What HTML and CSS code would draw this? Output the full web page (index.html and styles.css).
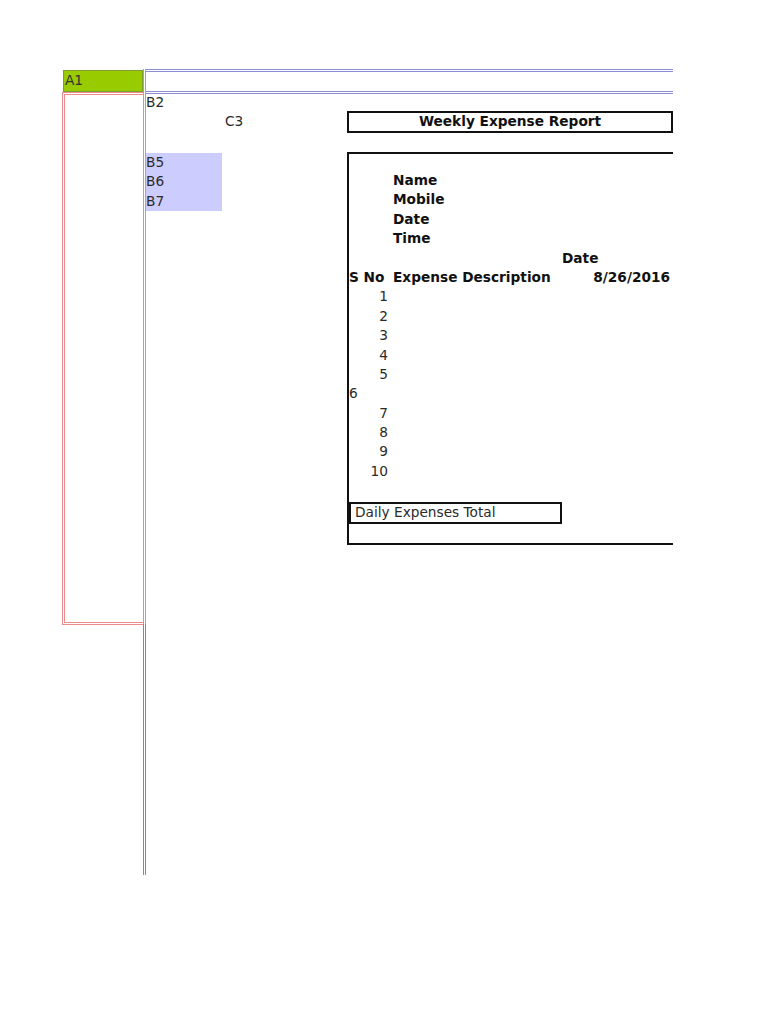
FILE: index.html
```html
<!DOCTYPE html>
<html>
<head>
<meta charset="utf-8">
<link rel="stylesheet" href="styles.css">
</head>
<body>
<div class="sheet">
  <div class="col-a">
    <div class="a1">A1</div>
    <div class="redbox"></div>
  </div>
  <div class="divider">
    <div class="div-red"></div>
    <div class="div-gray"></div>
  </div>
  <div class="main">
    <div class="toprow"></div>
    <div class="row-b2">B2</div>
    <div class="row-c3">
      <div class="cell-c3">C3</div>
      <div class="title">Weekly Expense Report</div>
    </div>
    <div class="body-row">
      <div class="sel">
        <div>B5</div>
        <div>B6</div>
        <div>B7</div>
      </div>
      <div class="report">
        <div class="row"><span></span><span class="lbl b">Name</span><span></span></div>
        <div class="row"><span></span><span class="lbl b">Mobile</span><span></span></div>
        <div class="row"><span></span><span class="lbl b">Date</span><span></span></div>
        <div class="row"><span></span><span class="lbl b">Time</span><span></span></div>
        <div class="row"><span></span><span></span><span class="date-h b">Date</span></div>
        <div class="row"><span class="b">S No</span><span class="lbl b">Expense Description</span><span class="date-v b">8/26/2016</span></div>
        <div class="row"><span class="num">1</span><span></span><span></span></div>
        <div class="row"><span class="num">2</span><span></span><span></span></div>
        <div class="row"><span class="num">3</span><span></span><span></span></div>
        <div class="row"><span class="num">4</span><span></span><span></span></div>
        <div class="row"><span class="num">5</span><span></span><span></span></div>
        <div class="row"><span class="six">6</span><span></span><span></span></div>
        <div class="row"><span class="num">7</span><span></span><span></span></div>
        <div class="row"><span class="num">8</span><span></span><span></span></div>
        <div class="row"><span class="num">9</span><span></span><span></span></div>
        <div class="row"><span class="num">10</span><span></span><span></span></div>
        <div class="total">Daily Expenses Total</div>
      </div>
    </div>
  </div>
</div>
</body>
</html>
```

FILE: styles.css
```css
html, body {
  margin: 0;
  padding: 0;
  background: #fff;
}
body {
  font-family: "DejaVu Sans", Verdana, sans-serif;
  font-size: 13.7px;
  color: #2a2a2a;
}
.sheet {
  display: flex;
  align-items: flex-start;
  margin: 69px 0 0 62px;
}
.col-a {
  width: 81px;
  padding-top: 1px;
}
.a1 {
  box-sizing: border-box;
  margin-left: 1px;
  width: 80px;
  height: 22px;
  background: #99cc00;
  border: 1px solid #7f9c34;
  line-height: 19px;
  padding-left: 1px;
  color: #333;
}
.redbox {
  box-sizing: border-box;
  height: 533px;
  border: 3px double #ee8c8c;
  border-right: none;
}
.divider {
  display: flex;
  flex-direction: column;
  width: 3px;
}
.div-red {
  box-sizing: border-box;
  height: 555px;
  border-left: 3px double #ee8888;
}
.div-gray {
  box-sizing: border-box;
  height: 251px;
  border-left: 3px double #888888;
}
.main {
  width: 527px;
}
.toprow {
  box-sizing: border-box;
  height: 25px;
  border-top: 3px double #8c8cd0;
  border-bottom: 3px double #8c8cd0;
}
.row-b2 {
  height: 17px;
  line-height: 16px;
}
.row-c3 {
  display: flex;
  height: 22px;
}
.cell-c3 {
  width: 201px;
  box-sizing: border-box;
  padding-left: 79px;
  line-height: 20px;
}
.title {
  box-sizing: border-box;
  width: 326px;
  height: 22px;
  border: 2px solid #111;
  text-align: center;
  font-weight: bold;
  color: #111;
  line-height: 17px;
}
.body-row {
  display: flex;
  margin-top: 19px;
}
.sel {
  width: 76px;
  height: 58px;
  margin-top: 1px;
  background: #ccccff;
  line-height: 19.4px;
}
.report {
  box-sizing: border-box;
  margin-left: 125px;
  width: 326px;
  height: 393px;
  border: 2px solid #111;
  border-right: none;
  padding-top: 17px;
}
.row {
  display: grid;
  grid-template-columns: 43px 168px 1fr;
  height: 19.4px;
  line-height: 19.4px;
  white-space: nowrap;
}
.b {
  font-weight: bold;
  color: #111;
}
.lbl { padding-left: 1px; }
.date-h { padding-left: 2px; }
.date-v { text-align: right; padding-right: 3px; }
.num { text-align: right; padding-right: 4px; }
.total {
  box-sizing: border-box;
  width: 213px;
  height: 22px;
  margin-top: 21px;
  border: 2px solid #111;
  padding-left: 4px;
  line-height: 17px;
}
```
